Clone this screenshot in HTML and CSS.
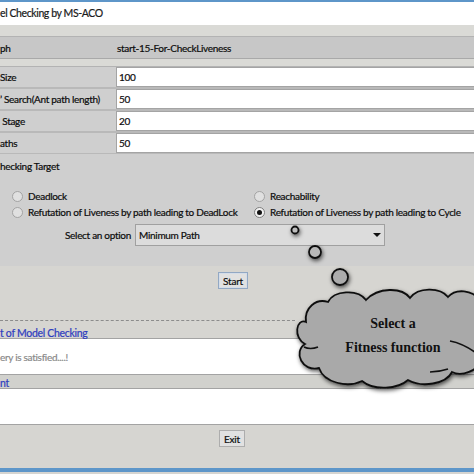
FILE: index.html
```html
<!DOCTYPE html>
<html lang="en">

<head>
    <meta charset="UTF-8">
    <meta name="viewport" content="width=device-width, initial-scale=1.0">
    <title>Model Checking by MS-ACO</title>
    <link rel="stylesheet" href="styles.css">
</head>

<body>
    <div class="window">
        <div class="edge"></div>
        <div class="titlebar">el Checking by MS-ACO</div>

        <div class="panel">
            <div class="band"></div>
            <div class="graph-row">
                <span class="label">ph</span>
                <span class="value">start-15-For-CheckLiveness</span>
            </div>
            <div class="band small"></div>

            <div class="fields">
                <div class="field"><span class="label">Size</span><input type="text" value="100"></div>
                <div class="field"><span class="label">&#8217; Search(Ant path length)</span><input type="text" value="50"></div>
                <div class="field"><span class="label"> Stage</span><input type="text" value="20"></div>
                <div class="field"><span class="label">aths</span><input type="text" value="50"></div>
            </div>

            <div class="group-title">hecking Target</div>

            <div class="radios">
                <label class="radio"><span class="dot"></span>Deadlock</label>
                <label class="radio"><span class="dot"></span>Reachability</label>
                <label class="radio"><span class="dot"></span>Refutation of Liveness by path leading to DeadLock</label>
                <label class="radio"><span class="dot checked"></span>Refutation of Liveness by path leading to Cycle</label>
            </div>

            <div class="option-row">
                <span class="option-label">Select an option</span>
                <div class="select">
                    <span>Minimum Path</span>
                    <svg width="8" height="4" viewBox="0 0 8 4"><path d="M0 0 L8 0 L4 4 Z" fill="#111"/></svg>
                </div>
            </div>
        </div>

        <div class="start-row">
            <button class="btn focused">Start</button>
        </div>

        <div class="rule"></div>
        <div class="section-title">t of Model Checking</div>
        <div class="textbox">ery is satisfied....!</div>
        <div class="section-title short">nt</div>
        <div class="textbox"></div>

        <div class="exit-row">
            <button class="btn">Exit</button>
        </div>
        <div class="edge bottom"></div>
    </div>

    <!-- thought bubble pointing at the fitness dropdown -->
    <svg class="callout" width="474" height="474" viewBox="0 0 474 474">
        <defs>
            <filter id="shade" x="-20%" y="-20%" width="140%" height="140%">
                <feDropShadow dx="1" dy="2" stdDeviation="2.2" flood-color="#000" flood-opacity="0.65"/>
            </filter>
        </defs>
        <g filter="url(#shade)" stroke="#111" stroke-width="1.8">
            <circle cx="295" cy="230" r="3.5" fill="#bdbdbd"/>
            <circle cx="315" cy="252" r="6" fill="#b8b8b8"/>
            <circle cx="340" cy="277" r="8" fill="#acacac"/>
            <path fill="#a9a9a9"
                  d="M306 322
                     C296 318 293 338 305 344
                     C293 352 302 372 319 368
                     C324 383 348 388 362 381
                     C374 391 398 389 408 380
                     C422 388 446 384 452 372
                     C462 377 478 370 480 362
                     L480 300
                     C472 290 456 288 448 297
                     C440 287 418 287 410 298
                     C402 287 378 287 366 300
                     C358 289 334 290 328 302
                     C316 298 304 308 306 322 Z"/>
        </g>
        <g fill="none" stroke="#111" stroke-width="1.6">
            <path d="M304 347 C308 349 313 349 318 347"/>
            <path d="M450 341 C460 343 468 347 476 353"/>
            <path d="M430 372 C436 372 442 371 448 369"/>
        </g>
        <text class="callout-text" x="393" y="328" text-anchor="middle">Select a</text>
        <text class="callout-text" x="393" y="352" text-anchor="middle">Fitness function</text>
    </svg>
</body>

</html>
```

FILE: styles.css
```css
body {
    margin: 0;
    overflow: hidden;
    font-family: Lato, "Liberation Sans", sans-serif;
    font-size: 10px;
    letter-spacing: -0.3px;
    color: #0c0c0c;
    -webkit-text-stroke: 0.2px currentColor;
}
.window {
    width: 474px;
    height: 474px;
    display: flex;
    flex-direction: column;
    background-color: #d6d5d1;
}

.edge {
    height: 2px;
    background-color: #5e96c9;
}
.edge.bottom {
    height: 4px;
}
.titlebar {
    height: 23px;
    line-height: 23px;
    background-color: #fff;
    font-size: 10.5px;
    letter-spacing: -0.4px;
    color: #1a1a1a;
}

.panel {
    background-color: #cfcfcf;
    padding-bottom: 20px;
}
.band {
    height: 11px;
    background-color: #dadad6;
    border-bottom: 1px solid #b3b3b3;
}
.band.small {
    height: 7px;
}
.graph-row {
    height: 21px;
    display: flex;
    align-items: center;
    background-color: #c7c7c7;
    border-bottom: 1px solid #a9a9a9;
}
.graph-row .label {
    width: 117px;
}

.fields {
    display: flex;
    flex-direction: column;
    gap: 2px;
    background-color: #b9b9b9;
    padding-bottom: 1px;
}
.field {
    display: flex;
    align-items: center;
    height: 20px;
    background-color: #cfcfcf;
}
.field .label {
    width: 116px;
    flex-shrink: 0;
    white-space: pre;
}
.field input {
    flex: 1;
    min-width: 0;
    height: 20px;
    box-sizing: border-box;
    border: 1px solid #a4a4a4;
    border-right: none;
    padding: 0 2px;
    font-family: inherit;
    font-size: 10px;
    letter-spacing: -0.3px;
    color: #0c0c0c;
    -webkit-text-stroke: 0.2px currentColor;
    background-color: #fff;
}

.group-title {
    height: 18px;
    line-height: 18px;
    margin-top: 3px;
}

.radios {
    display: grid;
    grid-template-columns: 242px 1fr;
    grid-auto-rows: 16px;
    padding: 13px 0 0 12px;
}
.radio {
    display: flex;
    align-items: center;
    gap: 5px;
    white-space: nowrap;
}
.dot {
    flex-shrink: 0;
    width: 9px;
    height: 9px;
    border-radius: 50%;
    border: 1px solid #a3a3a3;
    background-color: #e0e0e0;
    position: relative;
}
.dot.checked {
    border-color: #7d7d7d;
    background-color: #f2f2f2;
}
.dot.checked::after {
    content: "";
    position: absolute;
    left: 2px;
    top: 2px;
    width: 5px;
    height: 5px;
    border-radius: 50%;
    background-color: #111;
}

.option-row {
    display: grid;
    grid-template-columns: 131px 250px;
    gap: 4px;
    align-items: center;
    margin-top: 4px;
}
.option-label {
    text-align: right;
}
.select {
    height: 22px;
    box-sizing: border-box;
    border: 1px solid #a0a0a0;
    background-color: #dcdcdc;
    display: flex;
    align-items: center;
    justify-content: space-between;
    padding: 0 3px 0 3px;
}

.btn {
    height: 17px;
    padding: 0 4px;
    font-family: inherit;
    font-size: 10px;
    letter-spacing: -0.2px;
    color: #0c0c0c;
    -webkit-text-stroke: 0.2px currentColor;
    background-color: #e1e1e1;
    border: 1px solid #adadad;
}
.btn.focused {
    border-color: #92a8c4;
    box-shadow: inset 0 0 0 1px #d5dde8;
}
.start-row {
    height: 50px;
    box-sizing: border-box;
    padding: 6px 0 0 218px;
}
.rule {
    width: 295px;
    margin-top: 4px;
    border-top: 1px dashed #8c8c8c;
}
.section-title {
    height: 17px;
    line-height: 24px;
    color: #2e3dbf;
    font-size: 10.5px;
    border-bottom: 1px solid #a3a3a3;
}
.section-title.short {
    height: 13px;
    line-height: 17px;
    background-color: #d1d1cd;
}
.textbox {
    height: 35px;
    line-height: 36px;
    background-color: #fff;
    color: #8a8a8a;
    border-bottom: 1px solid #a3a3a3;
}
.exit-row {
    height: 43px;
    box-sizing: border-box;
    padding: 5px 0 0 219px;
}

.callout {
    position: absolute;
    left: 0;
    top: 0;
    pointer-events: none;
}
.callout-text {
    font-family: "Liberation Serif", "Times New Roman", serif;
    font-weight: bold;
    font-size: 14px;
    letter-spacing: 0;
    fill: #111;
    -webkit-text-stroke: 0;
}
```
